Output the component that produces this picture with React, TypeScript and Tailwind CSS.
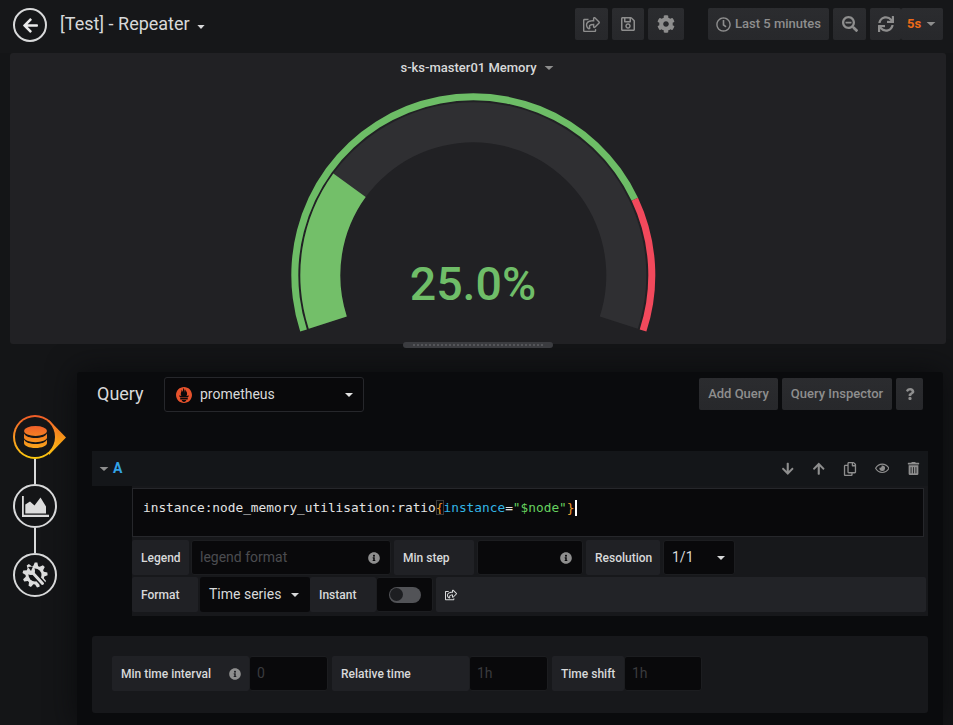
import React from "react";
import { FaArrowLeft, FaRegSave, FaCog, FaSearchMinus, FaSync, FaArrowDown, FaArrowUp, FaRegCopy, FaRegEye, FaTrashAlt, FaInfoCircle, FaQuestion, FaRegShareSquare, FaRegClock } from "react-icons/fa";
import { SiPrometheus } from "react-icons/si";

const CX = 473.3, CY = 275.3;
const pt = (r: number, a: number) => {
  const t = (a * Math.PI) / 180;
  return `${(CX + r * Math.cos(t)).toFixed(2)} ${(CY + r * Math.sin(t)).toFixed(2)}`;
};
const arc = (r0: number, r1: number, a0: number, a1: number) => {
  const large = a1 - a0 > 180 ? 1 : 0;
  return `M${pt(r1, a0)} A${r1} ${r1} 0 ${large} 1 ${pt(r1, a1)} L${pt(r0, a1)} A${r0} ${r0} 0 ${large} 0 ${pt(r0, a0)} Z`;
};

const gearPoints = (() => {
  const pts: string[] = [];
  const n = 9;
  for (let i = 0; i < n; i++) {
    const b = (i / n) * Math.PI * 2;
    const s = (Math.PI * 2) / n;
    [[9.4, -0.5], [12.6, -0.28], [12.6, 0.02], [9.4, 0.24]].forEach(([r, f]) => {
      const a = b + f * s;
      pts.push(`${(13 + r * Math.cos(a)).toFixed(2)},${(13 + r * Math.sin(a)).toFixed(2)}`);
    });
  }
  return pts.join(" ");
})();

const Caret = ({ className = "" }: { className?: string }) => (
  <span className={`inline-block w-0 h-0 border-x-[4px] border-x-transparent border-t-[4px] border-t-current ${className}`} />
);

const TopBtn = ({ className = "", children }: { className?: string; children: React.ReactNode }) => (
  <div className={`h-8 flex items-center justify-center rounded-[2px] bg-gradient-to-b from-[#2b2c2f] to-[#27282b] text-[#8e8e8e] ${className}`}>{children}</div>
);

const Label = ({ className = "", bg = "bg-[#202125]", children }: { className?: string; bg?: string; children: React.ReactNode }) => (
  <div className={`h-full flex items-center rounded-[2px] ${bg} pl-[9px] text-[12px] font-medium text-[#d8d9da] ${className}`}>{children}</div>
);

const Field = ({ className = "", children }: { className?: string; children?: React.ReactNode }) => (
  <div className={`h-full flex items-center rounded-[3px] border border-[#1c1d20] bg-[#09090b] ${className}`}>{children}</div>
);

const Info = () => <FaInfoCircle className="text-[#8e8e8e] text-[12px]" />;

const Step = ({ children, active = false }: { children: React.ReactNode; active?: boolean }) => (
  <div className={`relative w-[44px] h-[44px] rounded-full flex items-center justify-center ${active ? "bg-gradient-to-b from-[#f05a28] to-[#fbca0a] p-[2px]" : "border-[2px] border-[#d8d9da] bg-[#141517]"}`}>
    {active ? <div className="w-full h-full rounded-full bg-[#141517] flex items-center justify-center">{children}</div> : children}
  </div>
);

const QIcon = ({ children }: { children: React.ReactNode }) => (
  <div className="w-[31.5px] flex justify-center">{children}</div>
);

export default function App() {
  return (
    <div className="w-[953px] h-[725px] overflow-hidden relative flex flex-col bg-[#141517] text-[#d8d9da] font-['Roboto',sans-serif]">
      {/* top bar */}
      <div className="h-[53px] shrink-0 bg-[#161719] flex items-start">
        <div className="ml-[13px] mt-2 w-[34px] h-[34px] rounded-full border-[2px] border-[#d8d9da] flex items-center justify-center text-[#ececec]">
          <FaArrowLeft className="text-[17px]" />
        </div>
        <div className="ml-[13px] mt-[12px] text-[18px] leading-[24px] text-[#d8d9da]">[Test] - Repeater</div>
        <Caret className="ml-[7px] mt-[25px] text-[#d8d9da] scale-x-90" />
        <div className="ml-auto mr-[10px] mt-2 flex">
          <TopBtn className="w-[33px] mr-1"><FaRegShareSquare className="text-[17px]" /></TopBtn>
          <TopBtn className="w-[32px] mr-1"><FaRegSave className="text-[16px]" /></TopBtn>
          <TopBtn className="w-[36px] mr-6"><FaCog className="text-[18px]" /></TopBtn>
          <TopBtn className="w-[121px] mr-1 text-[13px] font-medium"><FaRegClock className="text-[15px] mr-[4px]" />Last 5 minutes</TopBtn>
          <TopBtn className="w-[33px] mr-1"><FaSearchMinus className="text-[16px]" /></TopBtn>
          <TopBtn className="w-[31px]"><FaSync className="text-[16px]" /></TopBtn>
          <TopBtn className="w-[42px] justify-start pl-[6px] text-[13px] font-bold"><span className="text-[#eb6a18]">5s</span><Caret className="ml-[6px] text-[#8e8e8e] scale-x-110" /></TopBtn>
        </div>
      </div>

      {/* gauge panel */}
      <div className="relative mx-[10px] w-[936px] h-[291px] shrink-0 rounded-[3px] bg-[#212124]">
        <div className="flex items-center justify-center h-[30px] pr-[3px] text-[13px] font-medium text-[#d8d9da]">
          s-ks-master01 Memory<Caret className="ml-[8px] text-[#8e8e8e] scale-x-110" />
        </div>
        <div className="absolute left-0 right-0 text-center top-[201px] pr-[10px] text-[46.500px] font-medium leading-[60px] text-[#6fbd68]">25.0%</div>
      </div>
      <svg className="absolute left-0 top-0 pointer-events-none" width="953" height="345" viewBox="0 0 953 345">
        <path d={arc(133, 173, 162, 378)} fill="#2f2f32" />
        <path d={arc(133, 173, 162, 216)} fill="#73bf69" />
        <path d={arc(175, 182, 162, 334.8)} fill="#6dbd66" />
        <path d={arc(175, 182, 334.8, 378)} fill="#f2495c" />
      </svg>
      <div className="absolute left-[403px] top-[342px] w-[150px] h-[6px] rounded-[3px] bg-[#3b3c40] flex items-center justify-center">
        <div className="w-[130px] h-[2px] bg-[repeating-linear-gradient(90deg,#55565a_0,#55565a_2px,transparent_2px,transparent_4px)]" />
      </div>

      <div className="flex mt-[28px] flex-1 min-h-0">
        {/* sidebar */}
        <div className="w-[77px] shrink-0 pl-[13px] pt-[43px] flex flex-col items-start">
          <div className="relative">
            <svg className="absolute left-0 top-0" width="54" height="44" viewBox="0 0 54 44">
              <defs>
                <linearGradient id="arrowg" gradientUnits="userSpaceOnUse" x1="0" y1="0" x2="0" y2="44"><stop offset="0" stopColor="#f05a28" /><stop offset="1" stopColor="#fbca0a" /></linearGradient>
                <linearGradient id="dbg" gradientUnits="userSpaceOnUse" x1="0" y1="0" x2="0" y2="22"><stop offset="0" stopColor="#f0602a" /><stop offset="1" stopColor="#f9a51a" /></linearGradient>
              </defs>
              <path d="M36 5 L53 22.500 L36 40 Z" fill="url(#arrowg)" />
            </svg>
            <Step active>
              <svg width="23" height="22" viewBox="0 0 23 22">
                <ellipse cx="11.500" cy="5" rx="11.500" ry="5" fill="url(#dbg)" />
                <path d="M0 7.500C1.500 10.500 6 12 11.500 12S21.500 10.500 23 7.500V11.500C23 14 18 16.200 11.500 16.200S0 14 0 11.500Z" fill="url(#dbg)" />
                <path d="M0 13.500C1.500 16.500 6 18 11.500 18S21.500 16.500 23 13.500V17C23 19.800 18 22 11.500 22S0 19.800 0 17Z" fill="url(#dbg)" />
              </svg>
            </Step>
          </div>
          <div className="w-[2px] h-[25px] bg-[#d8d9da] ml-[21px]" />
          <Step>
            <svg width="27" height="21" viewBox="0 0 27 21"><path d="M0 0h1.800v18.800H27V21H0z" fill="#dcdcdc" /><path d="M3.300 17.500V8.500L8 5.500l4.500 4L18.500 1.500 24 10.500v7z" fill="#dcdcdc" /></svg>
          </Step>
          <div className="w-[2px] h-[25px] bg-[#d8d9da] ml-[21px]" />
          <Step>
            <svg width="26" height="26" viewBox="0 0 26 26">
              <polygon points={gearPoints} fill="#dcdcdc" />
              <circle cx="13" cy="13" r="6.500" fill="#141517" />
              <path d="M9.500 9.500 L20.500 21.500" stroke="#141517" strokeWidth="6" strokeLinecap="round" />
              <path d="M9.500 9.500 L20.500 21.500" stroke="#dcdcdc" strokeWidth="3" strokeLinecap="round" />
              <circle cx="9" cy="9" r="4" fill="#dcdcdc" />
              <path d="M9 9 L6 5 L11 4.500 Z" fill="#141517" />
            </svg>
          </Step>
        </div>

        {/* query panel */}
        <div className="w-[866px] shrink-0 bg-[#0a0b0d] rounded-t-[3px] shadow-[0_0_30px_#0a0b0d] pt-[5px] pl-[15px] pr-[15px] flex flex-col">
          <div className="flex items-start h-[35px]">
            <div className="w-[72px] text-[18px] leading-[33px] pl-[5px] text-[#d8d9da]">Query</div>
            <div className="w-[200px] h-[35px] flex items-center rounded-[3px] border border-[#26272b] bg-[#09090b] pl-[11px] pr-[10px]">
              <SiPrometheus className="text-[#e6522c] text-[16px]" />
              <span className="ml-[8px] text-[14px] text-[#d8d9da]">prometheus</span>
              <Caret className="ml-auto text-[#e3e3e3]" />
            </div>
            <div className="ml-auto mr-[5px] mt-[1px] flex gap-1">
              <TopBtn className="w-[79px] text-[13px] font-medium">Add Query</TopBtn>
              <TopBtn className="w-[110px] text-[13px] font-medium">Query Inspector</TopBtn>
              <TopBtn className="w-[27px]"><FaQuestion className="text-[12px]" /></TopBtn>
            </div>
          </div>

          <div className="mt-[39px] h-[35px] shrink-0 bg-[#141619] flex items-center pl-[8px] text-[#8e8e8e]">
            <Caret className="scale-x-110 mr-[5px]" />
            <span className="text-[#33a2e5] text-[14px] font-bold">A</span>
            <div className="ml-auto -mr-[1px] flex items-center text-[13.5px]">
              <QIcon><FaArrowDown /></QIcon>
              <QIcon><FaArrowUp /></QIcon>
              <QIcon><FaRegCopy className="text-[14px]" /></QIcon>
              <QIcon><FaRegEye className="text-[14.5px]" /></QIcon>
              <QIcon><FaTrashAlt className="text-[13px]" /></QIcon>
            </div>
          </div>

          <div className="ml-[40px] w-[796px] h-[130px] shrink-0 bg-[#17181b] pt-[2px]">
            <div className="w-[792px] h-[49px] border border-[#26272b] bg-[#09090b] pl-[10px] pt-[10px] font-['DejaVu_Sans_Mono',monospace] text-[12.8px] leading-[18px] text-[#e3e3e3]">
              instance:node_memory_utilisation:ratio<span className="text-[#eb9a2d] outline outline-1 -outline-offset-1 outline-[#3a3a3a]">{"{"}</span><span className="text-[#33b5e5]">instance</span>=<span className="text-[#66d15f]">"$node"</span><span className="text-[#eb9a2d]">{"}"}</span><span className="inline-block w-[2px] h-[16px] bg-white align-middle -mt-[2px]" />
            </div>

            <div className="mt-[3px] h-[35px] flex">
              <Label className="w-[57px]">Legend</Label>
              <Field className="w-[200px] ml-[2px] pl-[8px] pr-[10px] justify-between text-[14px] text-[#4b4c50]">legend format<Info /></Field>
              <Label className="w-[80px] ml-[3px]">Min step</Label>
              <Field className="w-[106px] ml-[3px] pr-[10px] justify-end"><Info /></Field>
              <Label className="w-[74px] ml-[3px]">Resolution</Label>
              <Field className="w-[72px] ml-[3px] pl-[8px] pr-[9px] justify-between text-[14px] text-[#d8d9da]">1/1<Caret /></Field>
            </div>

            <div className="mt-[2px] h-[35px] w-[794px] flex">
              <Label className="w-[66px]">Format</Label>
              <Field className="w-[110px] ml-[2px] pl-[9px] pr-[11px] justify-between text-[14px] text-[#d8d9da] border-0">Time series<Caret /></Field>
              <Label className="w-[66px]">Instant</Label>
              <Field className="w-[57px] justify-center">
                <div className="w-[32px] h-[16px] rounded-full bg-[#525357] flex items-center pl-[1px]"><div className="w-[13px] h-[13px] rounded-full bg-[#1d1e21]" /></div>
              </Field>
              <Label bg="bg-[#222327]" className="flex-1 ml-[3px] pl-[9px] text-[#d8d9da]"><FaRegShareSquare className="text-[12px]" /></Label>
            </div>
          </div>

          <div className="mt-[20px] w-[836px] h-[77px] shrink-0 rounded-[3px] bg-[#17181b] pl-[20px] pt-[20px]">
            <div className="h-[35px] flex">
              <Label className="w-[137px] pr-[8px] justify-between">Min time interval<Info /></Label>
              <Field className="w-[79px] pl-[7px] text-[14px] text-[#3a3b3e]">0</Field>
              <Label className="w-[137px] ml-[4px]">Relative time</Label>
              <Field className="w-[79px] pl-[7px] text-[14px] text-[#3a3b3e]">1h</Field>
              <Label className="w-[72px] ml-[4px]">Time shift</Label>
              <Field className="w-[78px] pl-[7px] text-[14px] text-[#3a3b3e]">1h</Field>
            </div>
          </div>
        </div>
      </div>
    </div>
  );
}
